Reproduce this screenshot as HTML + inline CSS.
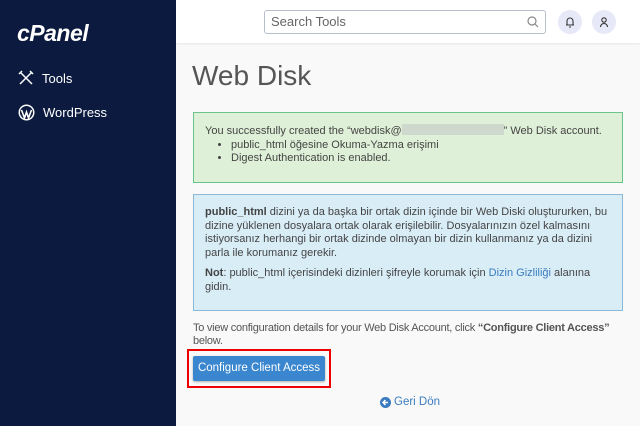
<!DOCTYPE html>
<html><head><meta charset="utf-8"><style>
*{box-sizing:border-box;margin:0;padding:0}
body{width:640px;height:426px;overflow:hidden;background:#f9f9f9;font-family:"Liberation Sans","DejaVu Sans",sans-serif;position:relative}
.side{position:absolute;left:0;top:0;width:176px;height:426px;background:#0b1a3e;color:#fff}
.logo{position:absolute;left:17px;top:20px;font-size:23px;font-weight:bold;font-style:italic;letter-spacing:-0.5px}
.nav{position:absolute;left:18px;font-size:13px;display:flex;align-items:center;gap:8px}
.top{position:absolute;left:176px;top:0;width:464px;height:43px;background:#fff;box-shadow:0 1px 2px rgba(0,0,0,.08)}
.search{position:absolute;left:88px;top:10px;width:282px;height:24px;border:1px solid #b8bfcc;border-radius:3px;font-size:13px;color:#666;padding:3px 6px}
.circ{position:absolute;top:10px;width:24px;height:24px;border-radius:50%;background:#e8e9f8}
h1{position:absolute;left:192px;top:60px;font-weight:normal;font-size:28px;color:#555;font-family:"Liberation Sans",sans-serif}
.box{position:absolute;left:193px;width:430px;font-size:11px;color:#444;line-height:13.5px}
.green{top:112px;height:71px;background:#dff0d8;border:1px solid #6bc58a;padding:11px 11px}
.blue{top:194px;height:117px;background:#d9edf7;border:1px solid #8cb8da;padding:11px 11px}
ul{margin-left:26px}
.blur{display:inline-block;width:102px;height:11px;background:#cfd8cc;vertical-align:-1px}
a{color:#3a7bbf;text-decoration:none}
.p{position:absolute;left:193px;top:322px;font-size:11px;color:#555;line-height:13px;width:440px;white-space:nowrap;letter-spacing:-0.25px}
.red{position:absolute;left:187px;top:349px;width:144px;height:39px;border:2px solid #e00}
.btn{position:absolute;left:193px;top:356px;width:132px;height:25px;background:#3a86cf;color:#fff;font-size:11.5px;text-align:center;line-height:25px;border-radius:2px;box-shadow:0 1px 2px rgba(0,0,0,.3)}
.back{position:absolute;left:380px;top:396px;font-size:11.5px;color:#3a7bbf;display:flex;align-items:center;gap:3px}
</style></head><body>
<div class="side">
<div class="logo">cPanel</div>
<div class="nav" style="top:70px"><svg width="16" height="16" viewBox="0 0 16 16" stroke="#fff" stroke-width="1.5" fill="none"><path d="M2 14L14 2M2 2l12 12M1 4l3-3M12 1l3 3"/></svg>Tools</div>
<div class="nav" style="top:104px"><svg width="17" height="17" viewBox="0 0 17 17"><circle cx="8.5" cy="8.5" r="8" fill="#fff"/><circle cx="8.5" cy="8.5" r="6.5" fill="#0b1a3e"/><path d="M3.5 6l3 8 2-6 2 6 3-8" stroke="#fff" stroke-width="1.6" fill="none"/></svg>WordPress</div>
</div>
<div class="top">
<div class="search">Search Tools<svg style="position:absolute;right:6px;top:5px" width="12" height="12" viewBox="0 0 12 12" fill="none" stroke="#888" stroke-width="1.2"><circle cx="5" cy="5" r="4"/><path d="M8 8l3 3"/></svg></div>
<div class="circ" style="left:382px"><svg width="24" height="24" viewBox="0 0 24 24" fill="none" stroke="#333" stroke-width="1.1"><path d="M9 15V11a3 3 0 016 0v4zM8 15h8M11 17h2"/></svg></div>
<div class="circ" style="left:416px"><svg width="24" height="24" viewBox="0 0 24 24" fill="none" stroke="#333" stroke-width="1.1"><circle cx="12" cy="10" r="2.2"/><path d="M8.5 17a3.5 3.5 0 017 0"/></svg></div>
</div>
<h1>Web Disk</h1>
<div class="box green">You successfully created the “webdisk@<span class="blur"></span>” Web Disk account.
<ul><li>public_html öğesine Okuma-Yazma erişimi</li><li>Digest Authentication is enabled.</li></ul></div>
<div class="box blue"><p><b>public_html</b> dizini ya da başka bir ortak dizin içinde bir Web Diski oluştururken, bu dizine yüklenen dosyalara ortak olarak erişilebilir. Dosyalarınızın özel kalmasını istiyorsanız herhangi bir ortak dizinde olmayan bir dizin kullanmanız ya da dizini parla ile korumanız gerekir.</p><p style="margin-top:7px"><b>Not</b>: public_html içerisindeki dizinleri şifreyle korumak için <a>Dizin Gizliliği</a> alanına<br>gidin.</p></div>
<div class="p">To view configuration details for your Web Disk Account, click <b>“Configure Client Access”</b><br>below.</div>
<div class="red"></div>
<div class="btn">Configure Client Access</div>
<div class="back"><svg width="11" height="11" viewBox="0 0 11 11"><circle cx="5.5" cy="5.5" r="5.5" fill="#3a7bbf"/><path d="M8 5.5H3.5M5.5 3L3 5.5 5.5 8" stroke="#fff" stroke-width="1.5" fill="none"/></svg>Geri Dön</div>
</body></html>
